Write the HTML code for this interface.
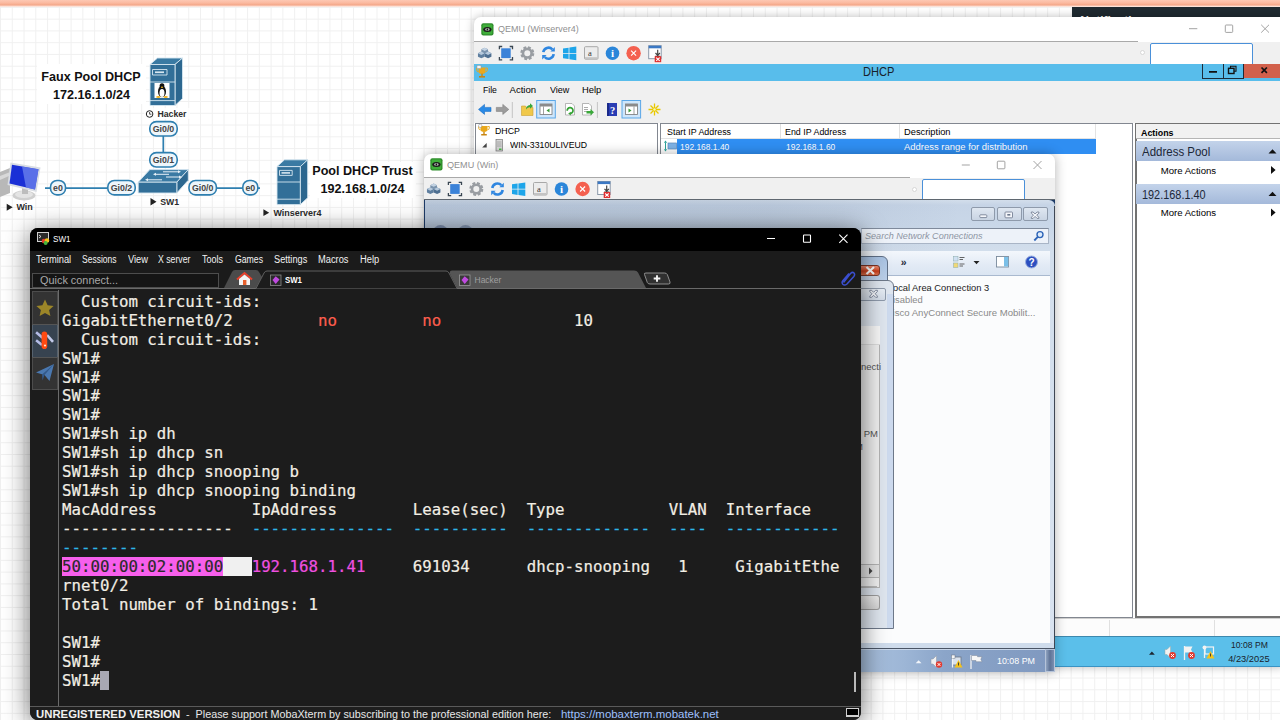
<!DOCTYPE html>
<html lang="en">
<head>
<meta charset="utf-8">
<title>SW1 - DHCP snooping lab</title>
<style>
*{box-sizing:border-box;margin:0;padding:0}
html,body{width:1280px;height:720px;overflow:hidden}
body{position:relative;background:#fff;font-family:"Liberation Sans",sans-serif;font-size:11px;color:#000}
.abs{position:absolute}
.t{position:absolute;white-space:nowrap;line-height:1}
/* background grid */
#grid{left:0;top:0;width:1280px;height:720px;
 background-image:linear-gradient(to right,#f0f0f0 1px,transparent 1px),linear-gradient(to bottom,#f0f0f0 1px,transparent 1px);
 background-size:11.78px 11.78px;background-position:0px 6.9px}
#topbar{left:0;top:0;width:1280px;height:7px;background:linear-gradient(to bottom,#fdc8b4 0,#fbb99f 3px,#f4a789 5px,#fad3c4 6px,#fff 7.500px)}
/* topology */
.lbl{font-weight:bold;font-size:13.5px;color:#111;text-align:center;background:#fff}
.pill{position:absolute;height:16px;border:1.6px solid #2f7fa8;border-radius:8px;background:#eaf4fb;color:#333;font-weight:bold;font-size:8.5px;line-height:13px;text-align:center}
.nodename{font-weight:bold;font-size:8.5px;color:#222}
.wire{position:absolute;background:#2f7fa8}
/* SW1 window */
#sw{left:30px;top:228px;width:831px;height:491.500px;background:#1c1c1c;border-radius:8px;box-shadow:0 4px 26px rgba(0,0,0,.6);overflow:hidden}
#sw .title{left:0;top:0;width:831px;height:22.800px;background:#000}
#sw .menu{left:0;top:22.800px;width:831px;height:18.200px;background:#1b1b1b}
#sw .menu span{position:absolute;top:3.300px;color:#f2f2f2;font-size:10px;line-height:11px;white-space:nowrap}
#term{left:32px;top:64.700px;font-family:"DejaVu Sans Mono","Liberation Mono",monospace;font-size:15.75px;line-height:18.95px;color:#f2eee4;-webkit-text-stroke:0.2px;white-space:pre;letter-spacing:0}
#term .r{color:#ff5f4f}
#term .c{color:#2db7e8}
#term .m{color:#f050e0}
#term .hl{background:#f75fec;color:#2a2a2a}
#term .hs{background:#f0f0f0}
#term .cur{background:#a8a8b4}
</style>
</head>
<body>
<div id="grid" class="abs"></div>
<div id="topbar" class="abs"></div>

<!-- TOPOLOGY -->
<div id="topo" class="abs" style="left:0;top:0;width:480px;height:230px">
<svg class="abs" style="left:0;top:0" width="480" height="230" viewBox="0 0 480 230" font-family="Liberation Sans, sans-serif" font-weight="bold">
 <!-- label backgrounds -->
 <rect x="37" y="64" width="109" height="40" fill="#fff"/>
 <rect x="310" y="162" width="106" height="36" fill="#fff"/>
 <rect x="144" y="108" width="46" height="11" fill="#fff" opacity=".8"/>
 <text x="91" y="80.500" font-size="12.600" text-anchor="middle" fill="#111">Faux Pool DHCP</text>
 <text x="91.500" y="98.500" font-size="12.600" text-anchor="middle" fill="#111">172.16.1.0/24</text>
 <text x="362.500" y="175.200" font-size="12.600" text-anchor="middle" fill="#111">Pool DHCP Trust</text>
 <text x="362.500" y="193" font-size="12.600" text-anchor="middle" fill="#111">192.168.1.0/24</text>
 <!-- wires -->
 <g stroke="#2e7fb0" stroke-width="1.700" fill="none">
  <path d="M163.300 136v17M45 188.100h62M216 188.100h44"/>
 </g>
 <!-- hacker server -->
 <g stroke="#d6e6f0" stroke-width="0.900" stroke-linejoin="round">
  <path d="M150 64.500L157.500 58H182.500L175 64.500z" fill="#3a7aa3"/>
  <path d="M175 64.500L182.500 58V98.500L175 105.500z" fill="#2c678f"/>
  <rect x="150" y="64.500" width="25" height="41" fill="#326f98"/>
  <rect x="152.500" y="69.500" width="14.500" height="5.500" fill="#326f98"/>
  <rect x="155" y="71.400" width="9" height="1.700" fill="#d6e6f0" stroke="none"/>
  <path d="M150 82h25M150 100.600h25" />
  <rect x="154.500" y="83" width="15" height="15" fill="#fff" stroke="none"/>
 </g>
 <!-- penguin -->
 <g>
  <ellipse cx="162" cy="91.500" rx="4" ry="5.800" fill="#111"/>
  <ellipse cx="162" cy="86" rx="2.400" ry="2.800" fill="#111"/>
  <ellipse cx="162" cy="93" rx="2.500" ry="4" fill="#fff"/>
  <ellipse cx="158.300" cy="97" rx="2.200" ry="1.100" fill="#f2b21d"/>
  <ellipse cx="165.700" cy="97" rx="2.200" ry="1.100" fill="#f2b21d"/>
  <ellipse cx="162" cy="87.200" rx="1.100" ry="0.700" fill="#f2b21d"/>
 </g>
 <!-- winserver -->
 <g stroke="#d6e6f0" stroke-width="0.900" stroke-linejoin="round">
  <path d="M277 166.600L284.500 159.800H307.700L300.300 166.600z" fill="#3a7aa3"/>
  <path d="M300.300 166.600L307.700 159.800V197.800L300.300 204.600z" fill="#2c678f"/>
  <rect x="277" y="166.600" width="23.300" height="38" fill="#326f98"/>
  <rect x="279.500" y="170.400" width="12.700" height="5" fill="#326f98"/>
  <rect x="281.500" y="172.100" width="8.500" height="1.600" fill="#d6e6f0" stroke="none"/>
  <path d="M277 182h23.300M277 199.200h23.300"/>
 </g>
 <!-- switch -->
 <g stroke="#d6e6f0" stroke-width="0.900" stroke-linejoin="round">
  <path d="M138.200 182.200L149.800 169.600H188.300L176.800 182.200z" fill="#3a7aa3"/>
  <path d="M176.800 182.200L188.300 169.600V180.200L176.800 193z" fill="#2c678f"/>
  <rect x="138.200" y="182.200" width="38.600" height="10.800" fill="#326f98"/>
 </g>
 <g stroke="#e8f1f7" stroke-width="1" fill="#e8f1f7">
  <path d="M163 171.800h15M156 174.300h13M166 177h13M148 179.800h14" fill="none"/>
  <path d="M178 170.300l3 1.500-3 1.500zM156 172.800l-3 1.500 3 1.500zM179 175.500l3 1.500-3 1.500zM148 178.300l-3 1.500 3 1.500z" stroke="none"/>
 </g>
 <!-- PC -->
 <g>
  <path d="M0 172L10 168V193L0 197z" fill="#b8b8b8"/>
  <path d="M0 176L9 172.500V176L0 180z" fill="#d8d8d8"/>
  <ellipse cx="24" cy="195.500" rx="11.500" ry="5" fill="#cfcfcf"/>
  <ellipse cx="24" cy="194.500" rx="9" ry="3.500" fill="#e4e4e4"/>
  <path d="M22 188h6v6h-6z" fill="#bdbdbd"/>
  <path d="M10.500 162.500L40.500 167.500L36.500 192L7.500 185z" fill="#d9dde4"/>
  <path d="M12 164.800L38.500 169.200L35 189.500L9.500 183.600z" fill="#1a2fd6"/>
  <path d="M22 166.400L38.500 169.200L35 189.500L26 187.500z" fill="#6f86ee" opacity=".75"/>
 </g>
 <!-- pills -->
 <g fill="#eef6fb" stroke="#2e7fb0" stroke-width="1.600">
  <rect x="149.800" y="121.600" width="27.400" height="14.400" rx="6.500"/>
  <rect x="149.800" y="152.600" width="27.400" height="14.400" rx="6.500"/>
  <rect x="107.800" y="180.500" width="27.400" height="14.400" rx="6.500"/>
  <rect x="189" y="180.500" width="27.400" height="14.400" rx="6.500"/>
  <rect x="50.500" y="180.500" width="15" height="14.400" rx="6.500"/>
  <rect x="242.800" y="180.500" width="15" height="14.400" rx="6.500"/>
 </g>
 <g font-size="8.800" fill="#444" text-anchor="middle">
  <text x="163.500" y="132">Gi0/0</text>
  <text x="163.500" y="163">Gi0/1</text>
  <text x="121.500" y="191">Gi0/2</text>
  <text x="202.700" y="191">Gi0/0</text>
  <text x="58" y="191">e0</text>
  <text x="250.300" y="191">e0</text>
 </g>
 <!-- node names -->
 <g font-size="8.700" fill="#2b2b2b">
  <text x="157.500" y="117.300">Hacker</text>
  <text x="160.200" y="204.800">SW1</text>
  <text x="16.500" y="210.300" font-size="8.950">Win</text>
  <text x="273.400" y="215.800" font-size="8.950">Winserver4</text>
 </g>
 <g fill="#222">
  <path d="M150.500 198l6 3.700-6 3.700zM6.700 203.700l6 3.500-6 3.500zM263.400 209.300l5.800 3.400-5.800 3.400z"/>
 </g>
 <circle cx="149.600" cy="114" r="3.300" fill="#fff" stroke="#222" stroke-width="1"/>
 <path d="M149.600 112v2.200h1.800" stroke="#222" stroke-width="0.800" fill="none"/>
</svg>
</div>

<!-- QEMU WINSERVER4 -->
<div class="abs" style="left:1071.700px;top:7px;width:210px;height:12px;background:#1f2a31;overflow:hidden"><span class="t" style="left:8.500px;top:8.300px;color:#fff;font-size:12px;font-weight:bold">Notifications</span></div>
<div id="q1" class="abs" style="left:474px;top:17.400px;width:810px;height:649.800px;background:#fff;border-radius:7px 0 0 0;box-shadow:0 0 10px rgba(0,0,0,.28);overflow:hidden">
 <!-- title -->
 <svg class="abs" style="left:7px;top:5.500px" width="13" height="13" viewBox="0 0 13 13"><rect x=".3" y=".3" width="12.200" height="12.200" rx="2" fill="#2f8d2c"/><rect x="1.600" y="1.600" width="9.600" height="9.600" rx="1.200" fill="#3fae3a"/><ellipse cx="6.400" cy="6.400" rx="4.200" ry="2.500" fill="#1c1c1c"/><ellipse cx="6.400" cy="6.400" rx="2.200" ry="1.200" fill="#cfd8cf"/><circle cx="6.400" cy="6.400" r=".9" fill="#111"/></svg>
 <span class="t" style="left:23.500px;top:6.700px;color:#909090;font-size:9.600px;transform:scaleX(0.935);transform-origin:0 0">QEMU (Winserver4)</span>
 <svg class="abs" style="left:710px;top:5px" width="90" height="14" viewBox="0 0 90 14"><g stroke="#a3a3a3" stroke-width="1" fill="none"><path d="M5 6.700h8.300"/><rect x="41.300" y="3" width="7.400" height="7.400" rx=".8"/><path d="M77.200 2.800l7.800 7.800M85 2.800l-7.800 7.800"/></g></svg>
 <div class="abs" style="left:0;top:24px;width:664px;height:1px;background:#a9a9a9"></div>
 <!-- qemu toolbar -->
 <div class="abs" style="left:0;top:25px;width:810px;height:22px;background:#f0f0f0"></div>
 <svg class="abs" style="left:0;top:25px" width="200" height="22" viewBox="0 0 200 22"><g transform="translate(0,11.2)">
  <!-- cubes -->
  <g transform="translate(3.400,-7.200) scale(1.12)"><path d="M3.500 3l3-1.500 3 1.500v3l-3 1.500-3-1.500z" fill="#7a93ad"/><path d="M3.500 3l3 1.500 3-1.500-3-1.500z" fill="#c3d3e3"/><path d="M0.500 6.500l3-1.500 3 1.500v3l-3 1.500-3-1.500z" fill="#5f7f9f"/><path d="M0.500 6.500l3 1.500 3-1.500-3-1.500z" fill="#b7cadd"/><path d="M6.500 6.500l3-1.500 3 1.500v3l-3 1.500-3-1.500z" fill="#4e6f91"/><path d="M6.500 6.500l3 1.500 3-1.500-3-1.500z" fill="#b7cadd"/></g>
  <!-- fullscreen -->
  <g transform="translate(24.700,-7.400)"><rect x="2.500" y="2.500" width="9.500" height="9.800" fill="#3b82d8"/><path d="M0.700 3.500v-2.800h2.800M11 .7h2.800v2.800M13.800 11.300v2.800h-2.800M3.500 14.100h-2.800v-2.800" fill="none" stroke="#3a4652" stroke-width="1.300"/></g>
  <!-- gear -->
  <g transform="translate(53.300,0)"><circle r="5.400" fill="none" stroke="#999da2" stroke-width="3.200" stroke-dasharray="2.600 1.641"/><circle r="4.300" fill="none" stroke="#999da2" stroke-width="2.600"/><circle r="2.100" fill="#f0f0f0"/></g>
  <!-- refresh -->
  <g transform="translate(74.500,0)" fill="none" stroke="#2f86e0" stroke-width="2.600"><path d="M-5.200 -1a5.200 5.200 0 0 1 9 -2.800"/><path d="M5.200 1a5.200 5.200 0 0 1 -9 2.800"/><path d="M6.300 -6.200v4.400h-4.400z" fill="#2f86e0" stroke="none"/><path d="M-6.300 6.200v-4.400h4.400z" fill="#2f86e0" stroke="none"/></g>
  <!-- windows -->
  <g transform="translate(89,-6.600)" fill="#1ea5e9"><path d="M0 1.900l5.600-.8v5.300h-5.600zM6.400 1l6.900-1v6.400h-6.900zM0 7.200h5.600v5.300l-5.600-.8zM6.400 7.200h6.900v6.400l-6.900-1z"/></g>
  <!-- text icon -->
  <g transform="translate(110,-7)"><rect x=".5" y=".5" width="13.500" height="12.500" rx="1" fill="#ececec" stroke="#a8a8a8"/><rect x="1" y="11" width="12.500" height="2" fill="#c4c4c4"/><text x="4" y="9.800" font-size="8.500" font-family="Liberation Serif,serif" fill="#333">a</text></g>
  <!-- info -->
  <g transform="translate(138.500,0)"><circle r="6.800" fill="#2b86d9"/><text x="0" y="4" font-size="11" font-weight="bold" font-family="Liberation Serif,serif" fill="#fff" text-anchor="middle">i</text></g>
  <!-- red x -->
  <g transform="translate(159.600,0)"><circle r="7.200" fill="#f4604f"/><path d="M-2.500-2.500l5 5M2.500-2.500l-5 5" stroke="#fff" stroke-width="1.100"/></g>
  <!-- window w arrow -->
  <g transform="translate(174.200,-8)"><rect x=".5" y=".5" width="12.500" height="13" fill="#fff" stroke="#8a98a8"/><rect x=".5" y=".5" width="12.500" height="2.600" fill="#3b78c4"/><path d="M9.500 4.500v5M7.300 7.800l2.200 2.400 2.200-2.400M7 11.200h5" stroke="#444" stroke-width="1.200" fill="none"/><rect x="6.500" y="11" width="6.500" height="6" fill="#e03030"/><path d="M8 12.500l3.500 3.200M11.500 12.500l-3.500 3.200" stroke="#fff" stroke-width="1.100"/></g>
 </g></svg>
 <div class="abs" style="left:665.500px;top:33px;width:5px;height:5px;border-radius:50%;background:#fff;border:1px solid #d6d6d6"></div>
 <div class="abs" style="left:676px;top:25.500px;width:102.500px;height:23px;background:#fff;border:1px solid #4a90d9;border-radius:2px"></div>
 <!-- DHCP title bar -->
 <div class="abs" style="left:0;top:46.200px;width:810px;height:17.600px;background:#58bdeb"></div>
 <svg class="abs" style="left:2px;top:48px" width="12" height="14" viewBox="0 0 12 14"><path d="M2.500 2.500h7v3.500q0 3-3.500 3t-3.500-3z" fill="#e9a81c"/><path d="M2.500 3h-1.800v2q0 1.800 2 2M9.500 3h1.800v2q0 1.800-2 2" stroke="#e9a81c" fill="none"/><rect x="5.300" y="8.500" width="1.400" height="2.500" fill="#c88612"/><rect x="3" y="11" width="6" height="1.600" fill="#c88612"/><rect x="1" y=".5" width="4" height="3" fill="#f4f4f4" stroke="#999" stroke-width=".5"/></svg>
 <span class="t" style="left:388.500px;top:48.800px;color:#17202a;font-size:12.300px;transform:scaleX(.9);transform-origin:0 0">DHCP</span>
 <div class="abs" style="left:728px;top:46.200px;width:22px;height:15px;border:1px solid #1d2b38;border-top:0"></div>
 <div class="abs" style="left:749.500px;top:46.200px;width:20.500px;height:15px;border:1px solid #1d2b38;border-top:0;border-left:0"></div>
 <div class="abs" style="left:770px;top:46.200px;width:40px;height:14.800px;background:#d2604b"></div>
 <svg class="abs" style="left:728px;top:46px" width="82" height="16" viewBox="0 0 82 16"><path d="M7 8.800h8" stroke="#111" stroke-width="1.800"/><rect x="26.500" y="5.300" width="5.500" height="5.200" fill="none" stroke="#111" stroke-width="1.400"/><path d="M28.500 5v-1.800h5.500v5h-1.800" fill="none" stroke="#111" stroke-width="1.100"/><path d="M59.500 4.500l5.400 5.400M64.900 4.500l-5.400 5.400" stroke="#111" stroke-width="1.700"/></svg>
 <!-- menu -->
 <div class="abs" style="left:0;top:63.800px;width:810px;height:18px;background:#f0f0f0"></div>
 <span class="t" style="left:8.500px;top:68px;font-size:9.600px;transform:scaleX(0.9);transform-origin:0 0">File</span><span class="t" style="left:25px;top:68px;font-size:9.600px;left:35.500px">Action</span><span class="t" style="left:75.500px;top:68px;font-size:9.600px;transform:scaleX(0.94);transform-origin:0 0">View</span><span class="t" style="left:108px;top:68px;font-size:9.600px;transform:scaleX(0.98);transform-origin:0 0">Help</span>
 <div class="abs" style="left:0;top:81.300px;width:810px;height:1px;background:#e2e2e2"></div>
 <!-- mmc toolbar -->
 <div class="abs" style="left:0;top:82px;width:810px;height:24px;background:#f0f0f0"></div>
 <svg class="abs" style="left:0;top:82px" width="200" height="24" viewBox="0 0 200 24">
  <path d="M4.500 10.400l6-5v3h6.500v4h-6.500v3z" fill="#2a8ae6" stroke="#1c6fc4" stroke-width=".6"/>
  <path d="M34.800 10.400l-6-5v3h-6.500v4h6.500v3z" fill="#9c9c9c" stroke="#808080" stroke-width=".6"/>
  <path d="M38.300 3v16M123.400 3v16" stroke="#c4c4c4" stroke-width="1"/>
  <g><path d="M47.500 7h4l1 1.500h6.500v8h-11.500z" fill="#f0c84a" stroke="#c9a032" stroke-width=".6"/><path d="M52 10.500q0-4 4-4.500v-1.800l3 2.800-3 2.800v-1.800q-2.500.2-4 2.500z" fill="#3aa83a"/></g>
  <rect x="62.700" y="1.500" width="18.600" height="17.500" fill="#cfe6fa" stroke="#5aa7e8"/>
  <g><rect x="66" y="5" width="12" height="10.500" fill="#fff" stroke="#777" stroke-width=".8"/><rect x="66" y="5" width="12" height="2.500" fill="#8a8a8a"/><path d="M69.500 7.500v8" stroke="#777" stroke-width=".7"/><path d="M75.500 9.500v4l-3-2z" fill="#3a9a3a"/></g>
  <g><path d="M91.500 4.500h6.500l2.500 2.500v9h-9z" fill="#fff" stroke="#9a9a9a" stroke-width=".7"/><path d="M93.200 11.800a2.900 2.900 0 1 1 2.900 2.700" fill="none" stroke="#34a334" stroke-width="1.700"/><path d="M96.800 12.800v3.600l-2.600-1.800z" fill="#34a334"/></g>
  <g><path d="M108.500 4.500h6.500l2.500 2.500v9h-9z" fill="#fff" stroke="#9a9a9a" stroke-width=".7"/><path d="M110 8.500h4M110 10.500h4M110 12.500h3" stroke="#888" stroke-width=".7"/><path d="M112.500 12h4v-2l3.500 3.200-3.500 3.200v-2h-4z" fill="#3aa83a"/></g>
  <g><rect x="133" y="4" width="10" height="13" fill="#2a3db4"/><rect x="133" y="4" width="2" height="13" fill="#1a2a8a"/><text x="138.700" y="14.500" font-size="10.500" font-weight="bold" fill="#fff" text-anchor="middle" font-family="Liberation Serif,serif">?</text></g>
  <rect x="148" y="1.500" width="18.600" height="17.500" fill="#cfe6fa" stroke="#5aa7e8"/>
  <g><rect x="151.500" y="5" width="12" height="10.500" fill="#fff" stroke="#777" stroke-width=".8"/><rect x="151.500" y="5" width="12" height="2.500" fill="#8a8a8a"/><path d="M160 7.500v8" stroke="#777" stroke-width=".7"/><path d="M154.500 9.500v4l3-2z" fill="#3a9a3a"/></g>
  <g stroke="#e8c800" stroke-width="1.300"><path d="M180.500 4.500v12M174.500 10.500h12M176.500 6.500l8 8M184.500 6.500l-8 8"/></g><circle cx="180.500" cy="10.500" r="1.200" fill="#fff8b0"/>
 </svg>
 <!-- tree panel -->
 <div class="abs" style="left:1px;top:105.500px;width:183px;height:520px;background:#fff;border:1px solid #828790"></div>
 <svg class="abs" style="left:3px;top:106px" width="30" height="32" viewBox="0 0 30 32"><path d="M3.500 3h7v3q0 3-3.500 3t-3.500-3z" fill="#e9a81c"/><path d="M3.500 3.500h-1.800v1.500q0 1.800 2 2M10.500 3.500h1.800v1.500q0 1.800-2 2" stroke="#e9a81c" fill="none" stroke-width=".9"/><rect x="6.300" y="9" width="1.400" height="2" fill="#c88612"/><rect x="4.200" y="11" width="5.600" height="1.500" fill="#c88612"/><circle cx="3.200" cy="2.800" r="1.700" fill="#fff" stroke="#888" stroke-width=".5"/>
  <path d="M9.700 24.500v-4.500l-4.500 4.500z" fill="#444"/><rect x="19" y="16.500" width="6.500" height="11.500" fill="#d8d8d8" stroke="#777" stroke-width=".7"/><path d="M20 19h4.500M20 21h4.500M20 23h4.500" stroke="#888" stroke-width=".6"/><rect x="22" y="25.500" width="2.500" height="1.500" fill="#4aba4a"/></svg>
 <span class="t" style="left:21px;top:108.600px;font-size:9.600px;transform:scaleX(0.92);transform-origin:0 0">DHCP</span>
 <span class="t" style="left:36px;top:123px;font-size:9.400px;transform:scaleX(0.93);transform-origin:0 0">WIN-3310ULIVEUD</span>
 <!-- list panel -->
 <div class="abs" style="left:186px;top:105.500px;width:472.500px;height:495.300px;background:#fff;border:1px solid #828790"></div>
 <div class="abs" style="left:187px;top:106.500px;width:434.500px;height:15px;background:#fff;border-bottom:1px solid #e3e3e3;border-right:1px solid #e3e3e3"></div>
 <div class="abs" style="left:305.500px;top:106.500px;width:1px;height:15px;background:#e0e0e0"></div>
 <div class="abs" style="left:424.500px;top:106.500px;width:1px;height:15px;background:#e0e0e0"></div>
 <span class="t" style="left:192.500px;top:109.500px;font-size:9.600px;transform:scaleX(0.926);transform-origin:0 0">Start IP Address</span>
 <span class="t" style="left:311px;top:109.500px;font-size:9.600px;transform:scaleX(0.926);transform-origin:0 0">End IP Address</span>
 <span class="t" style="left:429.500px;top:109.500px;font-size:9.600px;transform:scaleX(0.97);transform-origin:0 0">Description</span>
 <div class="abs" style="left:203.300px;top:121.800px;width:418.500px;height:14.800px;background:#2f8ef2"></div>
 <svg class="abs" style="left:189px;top:122px" width="15" height="15" viewBox="0 0 15 15"><path d="M2.500 1.500l1.600 2.300h-3.200zM2.500 12.500l1.600-2.300h-3.200z" fill="#2aa198"/><path d="M2.500 3.500v7" stroke="#2aa198" stroke-width="1"/><rect x="5" y="4" width="8.500" height="6" fill="#7fb2e5" stroke="#5a86b8" stroke-width=".7"/></svg>
 <span class="t" style="left:205.500px;top:124.500px;font-size:9.400px;color:#fff;transform:scaleX(0.9);transform-origin:0 0">192.168.1.40</span>
 <span class="t" style="left:311.500px;top:124.500px;font-size:9.400px;color:#fff;transform:scaleX(0.9);transform-origin:0 0">192.168.1.60</span>
 <span class="t" style="left:429.500px;top:124.500px;font-size:9.600px;color:#fff;transform:scaleX(0.986);transform-origin:0 0">Address range for distribution</span>
 <!-- actions panel -->
 <div class="abs" style="left:660.500px;top:105.300px;width:160px;height:495.500px;background:#fff;border:2px solid #727272"></div>
 <div class="abs" style="left:662px;top:107px;width:150px;height:15px;background:#f1f1f1;border-bottom:1px solid #b5b5b5"></div>
 <span class="t" style="left:666.500px;top:110.500px;font-size:9.800px;font-weight:bold;transform:scaleX(0.905);transform-origin:0 0">Actions</span>
 <div class="abs" style="left:662px;top:124px;width:150px;height:19.500px;background:linear-gradient(to bottom,#c3d3ea,#a4b9da)"></div>
 <span class="t" style="left:668px;top:128.800px;font-size:12.300px;color:#1c2738;transform:scaleX(0.934);transform-origin:0 0">Address Pool</span>
 <div class="abs" style="left:662px;top:166.700px;width:150px;height:19.500px;background:linear-gradient(to bottom,#c3d3ea,#a4b9da)"></div>
 <span class="t" style="left:668px;top:171.500px;font-size:12.300px;color:#1c2738;transform:scaleX(0.886);transform-origin:0 0">192.168.1.40</span>
 <span class="t" style="left:686.700px;top:148.300px;font-size:9.600px">More Actions</span>
 <span class="t" style="left:686.700px;top:190.800px;font-size:9.600px">More Actions</span>
 <svg class="abs" style="left:790px;top:124px" width="16" height="80" viewBox="0 0 16 80"><path d="M4.500 12.500l4-4.300 4 4.300zM4.500 55l4-4.300 4 4.300zM7 25l4.600 4-4.600 4zM7 67.500l4.600 4-4.600 4z" fill="#111"/></svg>
 <!-- status bar -->
 <div class="abs" style="left:0;top:600.900px;width:810px;height:18px;background:#fcfcfc;border-top:1px solid #d0d0d0"></div>
 <div class="abs" style="left:634.500px;top:603px;width:1px;height:16px;background:#e0e0e0"></div>
 <div class="abs" style="left:740px;top:603px;width:1px;height:16px;background:#e0e0e0"></div>
 <!-- taskbar -->
 <div class="abs" style="left:0;top:618.400px;width:810px;height:31.600px;background:#5bbfea;border-top:1px solid #3d88ad;border-bottom:1px solid #3a93c4"></div>
 <svg class="abs" style="left:670px;top:624.400px" width="76" height="22" viewBox="0 0 76 22">
  <path d="M5 12.700l2.900-3.200 2.900 3.200z" fill="#1c2530"/>
  <g><path d="M21 7.500h2l3.500-3.500v12l-3.500-3.500h-2z" fill="#f2f2f2" stroke="#9aa" stroke-width=".5"/><circle cx="28.500" cy="13.500" r="3.400" fill="#e23b30"/><path d="M27 12l3 3M30 12l-3 3" stroke="#fff" stroke-width="1"/></g>
  <g><path d="M40.500 4v14" stroke="#f2f2f2" stroke-width="1.300"/><path d="M41 4.500h7.500l-1.500 3 1.500 3h-7.500z" fill="#f2f2f2"/><circle cx="47.500" cy="13.500" r="3.400" fill="#e23b30"/><path d="M46 12l3 3M49 12l-3 3" stroke="#fff" stroke-width="1"/></g>
  <g><rect x="61" y="5" width="8.500" height="7" fill="none" stroke="#f2f2f2" stroke-width="1.200"/><circle cx="60.500" cy="5.500" r="2" fill="#f2f2f2"/><path d="M60.500 7v9" stroke="#f2f2f2" stroke-width="1.300"/><path d="M66.500 9l4 7.500h-8z" fill="#f5c21a"/><path d="M66.500 11.500v3" stroke="#333" stroke-width=".9"/></g>
 </svg>
 <span class="t" style="left:756.500px;top:624px;font-size:9.300px;color:#1a222c;transform:scaleX(0.927);transform-origin:0 0">10:08 PM</span>
 <span class="t" style="left:754.200px;top:637.200px;font-size:9.300px;color:#1a222c">4/23/2025</span>
</div>

<!-- QEMU WIN -->
<div id="q2" class="abs" style="left:424px;top:154px;width:631.400px;height:518px;background:#fff;border-radius:7px 7px 0 0;box-shadow:0 0 12px rgba(0,0,0,.3);overflow:hidden">
 <svg class="abs" style="left:6.300px;top:4.300px" width="13" height="13" viewBox="0 0 13 13"><rect x=".3" y=".3" width="12.200" height="12.200" rx="2" fill="#2f8d2c"/><rect x="1.600" y="1.600" width="9.600" height="9.600" rx="1.200" fill="#3fae3a"/><ellipse cx="6.400" cy="6.400" rx="4.200" ry="2.500" fill="#1c1c1c"/><ellipse cx="6.400" cy="6.400" rx="2.200" ry="1.200" fill="#cfd8cf"/><circle cx="6.400" cy="6.400" r=".9" fill="#111"/></svg>
 <span class="t" style="left:22.800px;top:6.300px;color:#909090;font-size:9.600px;transform:scaleX(0.945);transform-origin:0 0">QEMU (Win)</span>
 <svg class="abs" style="left:532px;top:4px" width="90" height="14" viewBox="0 0 90 14"><g stroke="#a3a3a3" stroke-width="1" fill="none"><path d="M5.800 7h8"/><rect x="41.300" y="3.200" width="7.600" height="7.600" rx=".8"/><path d="M77.500 3l8 8M85.500 3l-8 8"/></g></svg>
 <div class="abs" style="left:0;top:23px;width:486px;height:1px;background:#a9a9a9"></div>
 <div class="abs" style="left:0;top:24px;width:632px;height:22px;background:#f0f0f0"></div>
 <svg class="abs" style="left:-0.600px;top:24px" width="200" height="22" viewBox="0 0 200 22"><g transform="translate(0,11)">
  <!-- cubes -->
  <g transform="translate(3.400,-7.200) scale(1.12)"><path d="M3.500 3l3-1.500 3 1.500v3l-3 1.500-3-1.500z" fill="#7a93ad"/><path d="M3.500 3l3 1.500 3-1.500-3-1.500z" fill="#c3d3e3"/><path d="M0.500 6.500l3-1.500 3 1.500v3l-3 1.500-3-1.500z" fill="#5f7f9f"/><path d="M0.500 6.500l3 1.500 3-1.500-3-1.500z" fill="#b7cadd"/><path d="M6.500 6.500l3-1.500 3 1.500v3l-3 1.500-3-1.500z" fill="#4e6f91"/><path d="M6.500 6.500l3 1.500 3-1.500-3-1.500z" fill="#b7cadd"/></g>
  <!-- fullscreen -->
  <g transform="translate(24.700,-7.400)"><rect x="2.500" y="2.500" width="9.500" height="9.800" fill="#3b82d8"/><path d="M0.700 3.500v-2.800h2.800M11 .7h2.800v2.800M13.800 11.300v2.800h-2.800M3.500 14.100h-2.800v-2.800" fill="none" stroke="#3a4652" stroke-width="1.300"/></g>
  <!-- gear -->
  <g transform="translate(53.300,0)"><circle r="5.400" fill="none" stroke="#999da2" stroke-width="3.200" stroke-dasharray="2.600 1.641"/><circle r="4.300" fill="none" stroke="#999da2" stroke-width="2.600"/><circle r="2.100" fill="#f0f0f0"/></g>
  <!-- refresh -->
  <g transform="translate(74.500,0)" fill="none" stroke="#2f86e0" stroke-width="2.600"><path d="M-5.200 -1a5.200 5.200 0 0 1 9 -2.800"/><path d="M5.200 1a5.200 5.200 0 0 1 -9 2.800"/><path d="M6.300 -6.200v4.400h-4.400z" fill="#2f86e0" stroke="none"/><path d="M-6.300 6.200v-4.400h4.400z" fill="#2f86e0" stroke="none"/></g>
  <!-- windows -->
  <g transform="translate(89,-6.600)" fill="#1ea5e9"><path d="M0 1.900l5.600-.8v5.300h-5.600zM6.400 1l6.900-1v6.400h-6.900zM0 7.200h5.600v5.300l-5.600-.8zM6.400 7.200h6.900v6.400l-6.900-1z"/></g>
  <!-- text icon -->
  <g transform="translate(110,-7)"><rect x=".5" y=".5" width="13.500" height="12.500" rx="1" fill="#ececec" stroke="#a8a8a8"/><rect x="1" y="11" width="12.500" height="2" fill="#c4c4c4"/><text x="4" y="9.800" font-size="8.500" font-family="Liberation Serif,serif" fill="#333">a</text></g>
  <!-- info -->
  <g transform="translate(138.500,0)"><circle r="6.800" fill="#2b86d9"/><text x="0" y="4" font-size="11" font-weight="bold" font-family="Liberation Serif,serif" fill="#fff" text-anchor="middle">i</text></g>
  <!-- red x -->
  <g transform="translate(159.600,0)"><circle r="7.200" fill="#f4604f"/><path d="M-2.500-2.500l5 5M2.500-2.500l-5 5" stroke="#fff" stroke-width="1.100"/></g>
  <!-- window w arrow -->
  <g transform="translate(174.200,-8)"><rect x=".5" y=".5" width="12.500" height="13" fill="#fff" stroke="#8a98a8"/><rect x=".5" y=".5" width="12.500" height="2.600" fill="#3b78c4"/><path d="M9.500 4.500v5M7.300 7.800l2.200 2.400 2.200-2.400M7 11.200h5" stroke="#444" stroke-width="1.200" fill="none"/><rect x="6.500" y="11" width="6.500" height="6" fill="#e03030"/><path d="M8 12.500l3.500 3.200M11.500 12.500l-3.500 3.200" stroke="#fff" stroke-width="1.100"/></g>
 </g></svg>
 <div class="abs" style="left:487.800px;top:32.800px;width:5px;height:5px;border-radius:50%;background:#fff;border:1px solid #d6d6d6"></div>
 <div class="abs" style="left:498.300px;top:25.200px;width:102.500px;height:23px;background:#fff;border:1px solid #4a90d9;border-radius:2px"></div>
 <div class="abs" style="left:0;top:45.300px;width:632px;height:1px;background:#5f6770"></div>
 <!-- guest screen -->
 <div class="abs" style="left:0;top:46px;width:632px;height:472px;background:#1d3a66"></div>
 <!-- network connections window (aero, inactive) -->
 <div class="abs" style="left:1px;top:46px;width:630px;height:448px;background:linear-gradient(to right,rgba(60,80,110,.13) 0,rgba(60,80,110,.10) 55%,rgba(60,80,110,0) 85%),linear-gradient(to bottom,#d3deeb 0,#c6d4e6 5px,#c9d7e8 26px,#d2deec 50px,#d9e3f0 100%);border-radius:0 6px 0 0"></div>
 <div class="abs" style="left:9px;top:71px;width:15px;height:15px;border-radius:50%;background:#4a5f86;opacity:.55"></div><div class="abs" style="left:34px;top:71px;width:15px;height:15px;border-radius:50%;background:#4a5f86;opacity:.45"></div>
 <!-- caption buttons -->
 <div class="abs" style="left:546.900px;top:53.400px;width:24.400px;height:14px;border:1px solid #8e9aab;border-radius:2px;background:linear-gradient(#dfe7f1,#c9d4e3)"></div>
 <div class="abs" style="left:573.200px;top:53.400px;width:24.400px;height:14px;border:1px solid #8e9aab;border-radius:2px;background:linear-gradient(#dfe7f1,#c9d4e3)"></div>
 <div class="abs" style="left:599.400px;top:53.400px;width:24.400px;height:14px;border:1px solid #8e9aab;border-radius:2px;background:linear-gradient(#dfe7f1,#c9d4e3)"></div>
 <svg class="abs" style="left:547px;top:53.500px" width="78" height="14" viewBox="0 0 78 14"><g fill="#f4f6fa" stroke="#69758a" stroke-width=".8"><rect x="8.800" y="6.800" width="7" height="2.800" rx=".8"/><rect x="34" y="4" width="7.500" height="5.800" rx=".8"/><rect x="36.300" y="6" width="3" height="1.600" fill="#69758a" stroke="none"/><path d="M60.300 4l1.800 0 2 2 2-2 1.800 0 0 1.200-2.200 2 2.200 2 0 1.200-1.800 0-2-2-2 2-1.800 0 0-1.200 2.200-2-2.200-2z"/></g></svg>
 <!-- search box -->
 <div class="abs" style="left:436.600px;top:73.500px;width:188px;height:16.200px;background:#edf2f9;border:1px solid #a9b5c6;border-top-color:#7f8a9b"></div>
 <span class="t" style="left:440.800px;top:76.500px;color:#8d96a4;font-size:9.700px;font-style:italic;transform:scaleX(0.937);transform-origin:0 0">Search Network Connections</span>
 <svg class="abs" style="left:608.500px;top:75.500px" width="12" height="12" viewBox="0 0 12 12"><circle cx="7" cy="4.600" r="3" fill="#dcebfb" stroke="#2f65b8" stroke-width="1.400"/><path d="M4.800 6.900l-3.500 3.600" stroke="#2f65b8" stroke-width="1.800"/></svg>
 <!-- command bar -->
 <div class="abs" style="left:436.600px;top:97px;width:189.200px;height:24px;background:linear-gradient(to bottom,#f3f7fc,#e2eaf5 60%,#dbe5f2)"></div>
 <div class="abs" style="left:436.600px;top:120.500px;width:189.200px;height:1px;background:#a9b9cf"></div>
 <span class="t" style="left:476.800px;top:102.500px;color:#1e2a3a;font-size:10.500px;font-weight:bold">»</span>
 <svg class="abs" style="left:528px;top:100px" width="90" height="18" viewBox="0 0 90 18">
  <g><rect x="1.500" y="2.500" width="4.500" height="4.500" fill="#cfe0f2" stroke="#8aa" stroke-width=".5"/><rect x="1.500" y="9" width="4.500" height="4.500" fill="#f0d878" stroke="#8aa" stroke-width=".5"/><path d="M7.500 3.500h5M7.500 5.500h3.500M7.500 10h5M7.500 12h3.500" stroke="#555" stroke-width=".9"/></g>
  <path d="M21.500 7l3 3.300 3-3.300z" fill="#222"/>
  <g><rect x="44.500" y="2.500" width="12" height="10.500" fill="#fff" stroke="#7a8a9c" stroke-width=".9"/><rect x="52" y="3" width="4.200" height="9.500" fill="#7cc0e8"/></g>
  <g><circle cx="79.500" cy="8" r="6" fill="#2c4fc0" stroke="#9ab0e0" stroke-width="1"/><text x="79.500" y="11.700" font-size="10" font-weight="bold" fill="#fff" text-anchor="middle" font-family="Liberation Sans,sans-serif">?</text></g>
 </svg>
 <!-- content -->
 <div class="abs" style="left:430px;top:121.500px;width:195.800px;height:367px;background:#fbfcfd"></div>
 <span class="t" style="left:468.500px;top:128.500px;color:#1a1a1a;font-size:9.600px;transform:scaleX(0.969);transform-origin:0 0">ocal Area Connection 3</span>
 <span class="t" style="left:468.500px;top:141.300px;color:#8a8a8a;font-size:9.600px;transform:scaleX(0.977);transform-origin:0 0">isabled</span>
 <span class="t" style="left:468.500px;top:153.800px;color:#8a8a8a;font-size:9.600px">isco AnyConnect Secure Mobilit...</span>
 <!-- bottom frame -->
 <div class="abs" style="left:436.600px;top:488.500px;width:195px;height:5px;background:#cfdcec"></div>
 <div class="abs" style="left:436.600px;top:493.500px;width:195px;height:1px;background:#4a5566"></div>
 <div class="abs" style="left:630.400px;top:52px;width:1px;height:466px;background:#3f4754"></div>
 <!-- back window 1 (active, red close) -->
 <div class="abs" style="left:430px;top:102.200px;width:33.800px;height:30px;background:linear-gradient(#a9c3e3,#bfd2ea);border:1px solid #5f6f86;border-radius:0 6px 0 0"></div>
 <div class="abs" style="left:430px;top:110.500px;width:25.800px;height:11.800px;background:linear-gradient(#eb8c74,#d9532f 45%,#c63c1c 55%,#e0734f);border:1px solid #7c3424;border-radius:0 3px 3px 0"></div>
 <svg class="abs" style="left:441px;top:112px" width="12" height="10" viewBox="0 0 12 10"><path d="M1.500 1l7.500 7M9 1l-7.500 7" stroke="#fff" stroke-width="2.200"/></svg>
 <!-- back window 2 (inactive) -->
 <div class="abs" style="left:430px;top:126px;width:39.800px;height:349px;background:#dfe6ef;border:1px solid #6d7889;border-radius:0 6px 0 0"></div>
 <div class="abs" style="left:463.200px;top:140px;width:5.800px;height:334px;background:#cddaee"></div>
 <div class="abs" style="left:430px;top:133.500px;width:31.500px;height:13px;border:1px solid #8e9aab;border-radius:0 2px 2px 0;background:linear-gradient(#e8eef5,#d3dce8)"></div>
 <svg class="abs" style="left:444px;top:135px" width="12" height="10" viewBox="0 0 12 10"><path d="M1.800 1.300l1.800 0 2 2 2-2 1.800 0 0 1.200-2.200 2.300 2.200 2.300 0 1.200-1.800 0-2-2-2 2-1.800 0 0-1.200 2.200-2.300-2.200-2.300z" fill="#f4f6fa" stroke="#69758a" stroke-width=".8"/></svg>
 <div class="abs" style="left:430px;top:171.500px;width:25.800px;height:262px;background:#f0f0f0;border:1px solid #b4b4b4;border-left:0"></div>
 <div class="abs" style="left:430px;top:171.500px;width:25.800px;height:19px;background:#f7f7f7;border-bottom:1px solid #dcdcdc"></div>
 <span class="t" style="left:437px;top:207.500px;color:#555;font-size:9.500px">necti</span>
 <span class="t" style="left:439.700px;top:274.500px;color:#555;font-size:9.500px">PM</span>
 <span class="t" style="left:431px;top:287.500px;color:#555;font-size:9.500px">M</span>
 <div class="abs" style="left:430px;top:410px;width:25.800px;height:14px;background:#e4e4e4;border:1px solid #b4b4b4;border-left:0"></div>
 <svg class="abs" style="left:444px;top:413px" width="6" height="8" viewBox="0 0 6 8"><path d="M1 .5l3.500 3.500-3.500 3.500z" fill="#444"/></svg>
 <div class="abs" style="left:430px;top:432.300px;width:23px;height:1px;background:#b9b9b9"></div>
 <div class="abs" style="left:430px;top:441.400px;width:25.800px;height:15px;background:linear-gradient(#ececec,#d4d4d4);border:1px solid #9c9c9c;border-left:0;border-radius:0 3px 3px 0"></div>
 <!-- win7 taskbar -->
 <div class="abs" style="left:0;top:494.500px;width:632px;height:23.500px;background:linear-gradient(to right,#a9c0dd 436px,#9db6d6 480px,#8ba5c9 520px,#7f98bf 100%);border-top:1px solid #c9d7ea"></div>
 <div class="abs" style="left:620.800px;top:495px;width:10.600px;height:22.500px;background:linear-gradient(to right,#8fa3c0,#5f7396 50%,#7b8fb0);border:1px solid #b5c3d9"></div>
 <svg class="abs" style="left:488px;top:497px" width="76" height="20" viewBox="0 0 76 20">
  <path d="M3.700 12.200l2.900-3 2.900 3z" fill="#f2f5fa"/>
  <g><path d="M19 8h2l3.500-3.500v12l-3.500-3.500h-2z" fill="#f0f0f0" stroke="#8a94a4" stroke-width=".5"/><circle cx="27" cy="13.500" r="3.200" fill="#e23b30"/><path d="M25.600 12.100l2.800 2.800M28.400 12.100l-2.800 2.800" stroke="#fff" stroke-width="1"/></g>
  <g><rect x="40.500" y="6" width="8.500" height="8" fill="#d9e1ec" stroke="#6b7686" stroke-width=".8"/><rect x="39.500" y="4" width="3.500" height="3.500" fill="#f4f4f4" stroke="#6b7686" stroke-width=".5"/><path d="M40.500 7.500v9" stroke="#f4f4f4" stroke-width="1.200"/><path d="M46.500 9l4 7.500h-8z" fill="#f5c21a"/><path d="M46.500 11.500v3" stroke="#333" stroke-width=".9"/></g>
  <g><path d="M59 4v14" stroke="#f2f2f2" stroke-width="1.300"/><path d="M59.500 4.500h6v1.200h4.500l-1.200 2.500 1.200 2.500h-6v-1.200h-4.500z" fill="#f7f7f7" stroke="#7b8799" stroke-width=".5"/></g>
 </svg>
 <span class="t" style="left:573px;top:502px;color:#fff;font-size:9.600px;transform:scaleX(0.925);transform-origin:0 0">10:08 PM</span>
</div>

<!-- SW1 -->
<div id="sw" class="abs">
 <div class="abs title">
  <svg class="abs" style="left:7px;top:4px" width="13" height="13" viewBox="0 0 13 13"><rect x="0.5" y="0.5" width="11" height="9" fill="#2a2a2a" stroke="#cfcfcf" stroke-width="1"/><path d="M2 3l2 1.5-2 1.5" stroke="#fff" stroke-width="0.8" fill="none"/><circle cx="7" cy="9" r="2.3" fill="#e03a2a"/><circle cx="10" cy="8.5" r="2.2" fill="#f1c21b"/><circle cx="8.6" cy="11" r="2" fill="#47b53b"/></svg>
  <span class="t" style="left:23.300px;top:5.800px;color:#fff;font-size:9.500px;transform:scaleX(.85);transform-origin:0 0">SW1</span>
  <svg class="abs" style="left:736px;top:5px" width="86" height="12" viewBox="0 0 86 12"><g stroke="#fff" stroke-width="1.1" fill="none"><path d="M1 5.5h8"/><rect x="37.5" y="2" width="7" height="7.3" rx="0.6"/><path d="M73.3 1.6l8.2 8.2M81.5 1.6l-8.2 8.2"/></g></svg>
 </div>
 <div class="abs menu">
  <span style="left:5.5px;transform:scaleX(0.93);transform-origin:0 0">Terminal</span><span style="left:51.75px;transform:scaleX(0.85);transform-origin:0 0">Sessions</span><span style="left:97.5px;transform:scaleX(0.93);transform-origin:0 0">View</span><span style="left:128.25px;transform:scaleX(0.87);transform-origin:0 0">X server</span><span style="left:172px;transform:scaleX(0.9);transform-origin:0 0">Tools</span><span style="left:204.5px;transform:scaleX(0.87);transform-origin:0 0">Games</span><span style="left:243.5px;transform:scaleX(0.92);transform-origin:0 0">Settings</span><span style="left:288.25px;transform:scaleX(0.93);transform-origin:0 0">Macros</span><span style="left:330px;transform:scaleX(0.93);transform-origin:0 0">Help</span>
 </div>
 <!-- tab row -->
 <div class="abs" style="left:0;top:41px;width:830px;height:20px;background:#1b1b1b"></div>
 <div class="abs" style="left:0;top:59.500px;width:831px;height:1px;background:#6a6a6a"></div>
 <div class="abs" style="left:2px;top:45px;width:187px;height:15px;background:#151515;border:1px solid #4d4d4d"></div>
 <span class="t" style="left:10px;top:46.500px;color:#a9a9a9;font-size:10.900px">Quick connect...</span>
 <svg class="abs" style="left:190px;top:41px" width="490" height="20" viewBox="0 0 490 20">
  <path d="M4 19 L12 3 Q13 1 15 1 L36 1 Q38 1 39 3 L42 8 L36 19 Z" fill="#4b4b4b"/>
  <path d="M36 19.5 L44 4 Q45 2 47 2 L226 2 Q228 2 229 4 L237 19.5" fill="#1c1c1c" stroke="#5f5f5f" stroke-width="1"/>
  <path d="M237 19 L230 5 Q229 1.5 232 1.5 L414 1.5 Q417 1.5 418 3.5 L426 19 Z" fill="#555"/>
  <path d="M424.500 5.500 Q423.700 4 426 4 L444.500 4 Q446.500 4 447.300 5.500 L450 13 Q450.500 15 448.500 15 L430 15 Q428 15 427.300 13.500 Z" fill="#303030" stroke="#9a9a9a" stroke-width="0.900"/>
  <path d="M433.700 9.500h6.600M437 6.200v6.600" stroke="#f4f4f4" stroke-width="1.900"/>
  <!-- home icon -->
  <path d="M17 10.5 L24.5 4 L32 10.5" fill="none" stroke="#e8402c" stroke-width="2"/>
  <path d="M19 10 L24.5 5.5 L30 10 L30 16 L19 16 Z" fill="#f4f4f4"/>
  <rect x="23" y="11" width="3.4" height="5" fill="#e8602c"/>
  <!-- SW1 tab icon -->
  <rect x="50.500" y="6" width="10.500" height="10.500" fill="#2a2a2a" stroke="#8a8a8a" stroke-width="0.800"/>
  <path d="M55.700 7.300 l3.800 3.300 -3.800 4.400 -3.200 -4z" fill="#c04be0"/>
  <rect x="239.500" y="6" width="10.500" height="10.500" fill="#3a3a3a" stroke="#9a9a9a" stroke-width="0.800"/>
  <path d="M244.700 7.300 l3.800 3.300 -3.800 4.400 -3.200 -4z" fill="#c04be0"/>
 </svg>
 <span class="t" style="left:255px;top:47.800px;color:#fff;font-size:9px;font-weight:bold;transform:scaleX(.87);transform-origin:0 0">SW1</span>
 <span class="t" style="left:444.500px;top:48.300px;color:#a0a0a0;font-size:8.500px">Hacker</span>
 <svg class="abs" style="left:809px;top:42px" width="18" height="16" viewBox="0 0 18 16"><path d="M4.500 12.500 L11.500 3.500 Q13.500 1.500 15 3 Q16.300 4.500 14.800 6.500 L8 14 Q5.500 16 3.800 14.200 Q2.300 12.500 4 10.500 L10 3.500" fill="none" stroke="#3b4fd0" stroke-width="1.5"/></svg>
 <!-- sidebar -->
 <div class="abs" style="left:1.500px;top:63px;width:26.500px;height:99px;background:#333;border:1px solid #4c4c4c"></div>
 <div class="abs" style="left:2px;top:96px;width:26px;height:34px;background:#374350;border:1px solid #56626e"></div>
 <div class="abs" style="left:2px;top:129px;width:26px;height:1px;background:#555"></div>
 <div class="abs" style="left:2px;top:96px;width:26px;height:1px;background:#555"></div>
 <svg class="abs" style="left:5px;top:70px" width="20" height="20" viewBox="0 0 20 20"><path d="M10 1.500l2.600 5.700 6 .7-4.500 4.100 1.300 6-5.400-3.100-5.400 3.100 1.300-6L1.400 7.900l6-.7z" fill="#9c8628"/></svg>
 <svg class="abs" style="left:4px;top:101px" width="22" height="24" viewBox="0 0 22 24"><path d="M2.100 3.200L8.500 8.800M2.100 11.300L8 16" stroke="#b4bce6" stroke-width="2.600"/><path d="M13 6l6 6.800" stroke="#c4cbea" stroke-width="2.600"/><rect x="7.600" y="2.400" width="5.600" height="17.600" rx="2.800" fill="#ff4a12"/><circle cx="11" cy="16.500" r="1.100" fill="#ffe9c8"/></svg>
 <svg class="abs" style="left:5px;top:135px" width="20" height="20" viewBox="0 0 20 20"><path d="M1 9.500L19 1l-4.500 17-5-6z" fill="#4a78b0"/><path d="M19 1L7 11.500l.5 6 2-5.500z" fill="#33598a"/></svg>
 <div class="abs" style="left:27.500px;top:62px;width:1px;height:418px;background:#6b6b6b"></div>
 <div id="term" class="abs">  Custom circuit-ids:
GigabitEthernet0/2         <span class="r">no</span>         <span class="r">no</span>              10
  Custom circuit-ids:
SW1#
SW1#
SW1#
SW1#
SW1#sh ip dh
SW1#sh ip dhcp sn
SW1#sh ip dhcp snooping b
SW1#sh ip dhcp snooping binding
MacAddress          IpAddress        Lease(sec)  Type           VLAN  Interface
------------------  <span class="c">---------------  ----------  -------------  ----  ------------</span>
<span class="c">--------</span>
<span class="hl">50:00:00:02:00:00</span><span class="hs">   </span><span class="m">192.168.1.41</span>     691034      dhcp-snooping   1     GigabitEthe
rnet0/2
Total number of bindings: 1

SW1#
SW1#
SW1#<span class="cur"> </span></div>
 <!-- scrollbar nub + status -->
 <div class="abs" style="left:824px;top:444.200px;width:2px;height:19.800px;background:#b9b9b9"></div>
 <div class="abs" style="left:0;top:478px;width:831px;height:14px;background:#1e1e1e;border-top:1px solid #5a5a5a"></div>
 <span class="t" style="left:6px;top:481.200px;color:#f0f0f0;font-size:10.500px;font-weight:bold;transform:scaleX(1.08);transform-origin:0 0">UNREGISTERED VERSION</span>
 <span class="t" style="left:156px;top:481.200px;color:#e8e8e8;font-size:10.500px;transform:scaleX(1.026);transform-origin:0 0">-&nbsp; Please support MobaXterm by subscribing to the professional edition here:</span>
 <span class="t" style="left:531px;top:481.200px;color:#9fc0ff;font-size:10.500px;transform:scaleX(1.09);transform-origin:0 0">https://mobaxterm.mobatek.net</span>
 <div class="abs" style="left:816.300px;top:480px;width:12.800px;height:9.300px;border:1px solid #cfcfcf;border-bottom-width:2px;background:#000"></div>
</div>
</body>
</html>
